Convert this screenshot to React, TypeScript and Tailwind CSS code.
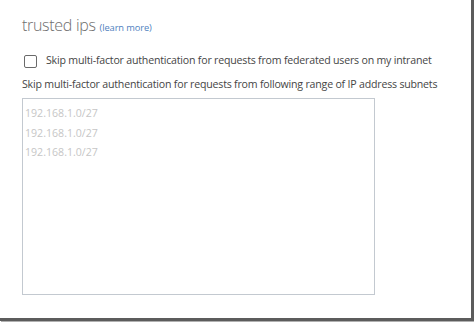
import React from 'react';

const ipLines = ['192.168.1.0/27', '192.168.1.0/27', '192.168.1.0/27'];

const App = () => {
    return (
        <div className="w-[474px] h-[322px] bg-white overflow-hidden" style={{ fontFamily: '"Open Sans", "Noto Sans", sans-serif' }}>
            <div className="w-[474px] h-[321px] border-r-[3px] border-b-[3px] border-[#5c5c5c] shadow-[1px_1px_0_#b0b0b0] pl-[22px] pt-[13px]">
                {/* Header */}
                <div className="flex items-baseline gap-[4px] h-[24px]">
                    <h2 className="text-[16px] font-light text-[#6e6e6e] leading-[24px] tracking-[-0.3px]">trusted ips</h2>
                    <a className="text-[9.3px] text-[#4f7fc0] tracking-[-0.1px]">(learn more)</a>
                </div>

                {/* Federated users option */}
                <label className="mt-[16px] h-[16px] flex items-center gap-[9px] pl-[2px] text-[10.6px] text-[#454545] tracking-[-0.2px] whitespace-nowrap">
                    <span className="w-[13px] h-[13px] border border-[#6a6a6a] rounded-[2px] bg-white shrink-0" />
                    Skip multi-factor authentication for requests from federated users on my intranet
                </label>

                <p className="mt-[7px] h-[16px] leading-[16px] text-[10.6px] text-[#454545] tracking-[-0.2px] whitespace-nowrap">
                    Skip multi-factor authentication for requests from following range of IP address subnets
                </p>

                {/* IP subnets textarea */}
                <div className="mt-[6px] w-[353px] h-[197px] border border-[#c3c9d0] pt-[5px] pl-[2px]">
                    {ipLines.map((ip, i) => (
                        <div key={i} className="text-[10.6px] leading-[19.5px] text-[#c6c6c6]">{ip}</div>
                    ))}
                </div>
            </div>
        </div>
    );
};

export default App;
